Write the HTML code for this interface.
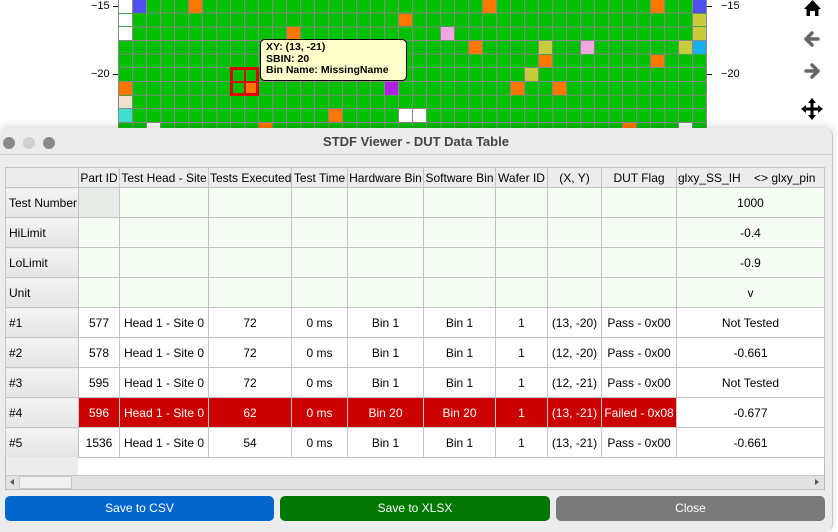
<!DOCTYPE html>
<html><head><meta charset="utf-8"><style>
*{margin:0;padding:0;box-sizing:border-box}
body{width:838px;height:532px;overflow:hidden;background:#fff;font-family:"Liberation Sans",sans-serif;position:relative}
.grid{position:absolute;left:118px;top:-1px;width:589px;height:131px;background-color:#00c000;
background-image:repeating-linear-gradient(90deg,#888 0 1px,transparent 1px 14px),repeating-linear-gradient(180deg,#888 0 1px,transparent 1px 13.65px)}
.c{position:absolute;width:13px;height:12.6px}
.lab{position:absolute;font-size:11px;color:#000}
.tick{position:absolute;width:5px;height:1px;background:#000}
.tip{position:absolute;left:260px;top:39px;width:147px;height:42px;background:#ffffcc;border:1.5px solid #000;border-radius:5px;font-size:10.5px;font-weight:bold;line-height:11.5px;padding:2px 5px}
.win{position:absolute;left:0;top:128px;width:833px;height:404px;background:#ececec;border-radius:8px 8px 8px 0;box-shadow:0 -2px 8px rgba(0,0,0,.15);border-right:1px solid #c8c8c8}
.title{position:absolute;left:0;right:0;top:0;height:27px;border-bottom:1px solid #d0d0d0;text-align:center;font-weight:bold;font-size:13px;color:#444;line-height:28px}
.dot{position:absolute;top:9px;width:12px;height:12px;border-radius:50%;background:#8a8a8a}
table{position:absolute;left:5px;top:167px;width:819px;border-collapse:collapse;font-size:12px;table-layout:fixed;background:#fff}
td{border:1px solid #c4c4c4;height:30px;text-align:center;white-space:nowrap;overflow:hidden;padding:0 1px}
tr.h td{height:20px;background:#ececec;border-color:#c4c4c4}
td.rh{text-align:left;background:linear-gradient(#f4f4f4,#e4e4e4);padding-left:3px}
tr.l td{background:#f5fdf4}
tr.l td.rh{background:linear-gradient(#f4f4f4,#e4e4e4)}
tr.r td{background:#cc0000;color:#fff}
tr.r td.rh,tr.r td.g{background:#fff;color:#000}
tr.r td.rh{background:linear-gradient(#f4f4f4,#e4e4e4)}
.btn{position:absolute;top:496px;height:25px;border-radius:5px;color:#fff;font-size:12px;text-align:center;line-height:25px}
</style></head><body>
<div class="grid">
<div class="c" style="left:1px;top:1px;background:#fff"></div>
<div class="c" style="left:1px;top:14.6px;background:#fff"></div>
<div class="c" style="left:1px;top:28.3px;background:#fff"></div>
<div class="c" style="left:15px;top:1px;background:#5050ee"></div>
<div class="c" style="left:71px;top:1px;background:#ff7700"></div>
<div class="c" style="left:365px;top:1px;background:#ff7700"></div>
<div class="c" style="left:533px;top:1px;background:#ff7700"></div>
<div class="c" style="left:575px;top:1px;background:#5050ee"></div>
<div class="c" style="left:281px;top:14.6px;background:#ff7700"></div>
<div class="c" style="left:575px;top:14.6px;background:#c8cc3c"></div>
<div class="c" style="left:169px;top:28.3px;background:#ff7700"></div>
<div class="c" style="left:323px;top:28.3px;background:#f0a8e0"></div>
<div class="c" style="left:575px;top:28.3px;background:#c8cc3c"></div>
<div class="c" style="left:351px;top:42px;background:#ff7700"></div>
<div class="c" style="left:421px;top:42px;background:#c8cc3c"></div>
<div class="c" style="left:463px;top:42px;background:#f0a8e0"></div>
<div class="c" style="left:561px;top:42px;background:#c8cc3c"></div>
<div class="c" style="left:575px;top:42px;background:#1ab0f0"></div>
<div class="c" style="left:421px;top:55.6px;background:#ff7700"></div>
<div class="c" style="left:533px;top:55.6px;background:#ff7700"></div>
<div class="c" style="left:407px;top:69.3px;background:#c8cc3c"></div>
<div class="c" style="left:1px;top:83px;background:#ff7700"></div>
<div class="c" style="left:127px;top:83px;background:#ff7700"></div>
<div class="c" style="left:267px;top:83px;background:#b020e0"></div>
<div class="c" style="left:393px;top:83px;background:#ff7700"></div>
<div class="c" style="left:435px;top:83px;background:#ff7700"></div>
<div class="c" style="left:1px;top:96.6px;background:#f0e0d0"></div>
<div class="c" style="left:1px;top:110.3px;background:#40e0d0"></div>
<div class="c" style="left:211px;top:110.3px;background:#ff7700"></div>
<div class="c" style="left:281px;top:110.3px;background:#fff"></div>
<div class="c" style="left:295px;top:110.3px;background:#fff"></div>
<div class="c" style="left:29px;top:124px;background:#fff"></div>
<div class="c" style="left:141px;top:124px;background:#ff7700"></div>
<div class="c" style="left:505px;top:124px;background:#ff7700"></div>
<div class="c" style="left:561px;top:124px;background:#fff"></div>
<div style="position:absolute;left:112px;top:68.3px;width:29px;height:29px;border:3px solid #e00000"></div>
<div style="position:absolute;left:126px;top:68.3px;width:2px;height:29px;background:#e00000"></div>
<div style="position:absolute;left:112px;top:81.6px;width:29px;height:2.5px;background:#e00000"></div>
</div>
<div class="lab" style="left:91px;top:0px">−15</div>
<div class="lab" style="left:91px;top:68px">−20</div>
<div class="lab" style="left:721px;top:0px">−15</div>
<div class="lab" style="left:721px;top:68px">−20</div>
<div class="tick" style="left:113px;top:6px"></div><div class="tick" style="left:113px;top:74px"></div>
<div class="tick" style="left:707px;top:6px"></div><div class="tick" style="left:707px;top:74px"></div>
<div class="tip">XY: (13, -21)<br>SBIN: 20<br>Bin Name: MissingName</div>
<svg style="position:absolute;left:800px;top:0" width="26" height="125" viewBox="0 0 26 125">
<path d="M4 9 L12.5 0 L21 9 L18.5 9 L18.5 16 L15 16 L15 11 L10 11 L10 16 L6.5 16 L6.5 9 Z" fill="#000"/>
<path d="M18 39 H8 M12 33 L6 39 L12 45" stroke="#666" stroke-width="3.5" fill="none" stroke-linecap="round" stroke-linejoin="round"/>
<path d="M6 71 H16 M12 65 L18 71 L12 77" stroke="#666" stroke-width="3.5" fill="none" stroke-linecap="round" stroke-linejoin="round"/>
<path d="M12 101 V117 M3 109 H21" stroke="#000" stroke-width="3"/>
<path d="M12 98 L8 103 H16 Z M12 120 L8 115 H16 Z M1 109 L6 105 V113 Z M23 109 L18 105 V113 Z" fill="#000"/>
</svg>
<div class="win">
<div class="title">STDF Viewer - DUT Data Table</div>
<div class="dot" style="left:3px"></div><div class="dot" style="left:23px;background:#d0d0d0"></div><div class="dot" style="left:43px"></div>
</div>
<div style="position:absolute;left:5px;top:167px;width:820px;height:323px;border:1px solid #bdbdbd;background:#fff"></div>
<table>
<colgroup><col style="width:73px"><col style="width:41px"><col style="width:89px"><col style="width:83px"><col style="width:56px"><col style="width:76px"><col style="width:72px"><col style="width:52px"><col style="width:54px"><col style="width:75px"><col style="width:148px"></colgroup>
<tr class="h"><td></td><td>Part ID</td><td>Test Head - Site</td><td>Tests Executed</td><td>Test Time</td><td>Hardware Bin</td><td>Software Bin</td><td>Wafer ID</td><td>(X, Y)</td><td>DUT Flag</td><td style="text-align:left">glxy_SS_IH &nbsp;&nbsp;&nbsp;&lt;&gt; glxy_pin</td></tr>
<tr class="l"><td class="rh">Test Number</td><td style="background:#e8ece8"></td><td></td><td></td><td></td><td></td><td></td><td></td><td></td><td></td><td>1000</td></tr>
<tr class="l"><td class="rh">HiLimit</td><td></td><td></td><td></td><td></td><td></td><td></td><td></td><td></td><td></td><td>-0.4</td></tr>
<tr class="l"><td class="rh">LoLimit</td><td></td><td></td><td></td><td></td><td></td><td></td><td></td><td></td><td></td><td>-0.9</td></tr>
<tr class="l"><td class="rh">Unit</td><td></td><td></td><td></td><td></td><td></td><td></td><td></td><td></td><td></td><td>v</td></tr>
<tr><td class="rh">#1</td><td>577</td><td>Head 1 - Site 0</td><td>72</td><td>0 ms</td><td>Bin 1</td><td>Bin 1</td><td>1</td><td>(13, -20)</td><td>Pass - 0x00</td><td>Not Tested</td></tr>
<tr><td class="rh">#2</td><td>578</td><td>Head 1 - Site 0</td><td>72</td><td>0 ms</td><td>Bin 1</td><td>Bin 1</td><td>1</td><td>(12, -20)</td><td>Pass - 0x00</td><td>-0.661</td></tr>
<tr><td class="rh">#3</td><td>595</td><td>Head 1 - Site 0</td><td>72</td><td>0 ms</td><td>Bin 1</td><td>Bin 1</td><td>1</td><td>(12, -21)</td><td>Pass - 0x00</td><td>Not Tested</td></tr>
<tr class="r"><td class="rh">#4</td><td>596</td><td>Head 1 - Site 0</td><td>62</td><td>0 ms</td><td>Bin 20</td><td>Bin 20</td><td>1</td><td>(13, -21)</td><td>Failed - 0x08</td><td class="g">-0.677</td></tr>
<tr><td class="rh">#5</td><td>1536</td><td>Head 1 - Site 0</td><td>54</td><td>0 ms</td><td>Bin 1</td><td>Bin 1</td><td>1</td><td>(13, -21)</td><td>Pass - 0x00</td><td>-0.661</td></tr>
</table>
<div style="position:absolute;left:6px;top:457px;width:72px;height:18px;background:#ececec"></div>
<div style="position:absolute;left:6px;top:475px;width:818px;height:14px;background:#e2e2e2;border-top:1px solid #c8c8c8"></div>
<div style="position:absolute;left:19px;top:476px;width:53px;height:13px;background:#f0f0f0;border:1px solid #c8c8c8"></div>
<div style="position:absolute;left:10px;top:479px;border:3px solid transparent;border-right:4px solid #555;border-left:0"></div>
<div style="position:absolute;left:815px;top:479px;border:3px solid transparent;border-left:4px solid #555;border-right:0"></div>
<div class="btn" style="left:5px;width:269px;background:#0066cc">Save to CSV</div>
<div class="btn" style="left:280px;width:270px;background:#007700">Save to XLSX</div>
<div class="btn" style="left:556px;width:269px;background:#7a7a7a">Close</div>
</body></html>
